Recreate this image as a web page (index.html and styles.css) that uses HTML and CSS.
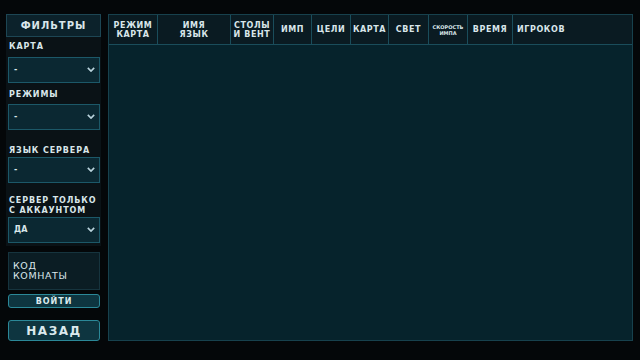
FILE: index.html
```html
<!DOCTYPE html>
<html lang="ru">
<head>
  <meta charset="UTF-8">
  <title>Лобби</title>
  <link rel="stylesheet" href="styles.css">
</head>
<body>

<div class="screen">
  <div class="sidebar">
    <div class="sidebar-title">ФИЛЬТРЫ</div>
    <div class="filters">
      <div class="label">КАРТА</div>
      <div class="select"><span>-</span><svg class="chev" viewBox="0 0 10 6"><path d="M1 1 L5 5 L9 1" /></svg></div>
      <div class="label l2">РЕЖИМЫ</div>
      <div class="select"><span>-</span><svg class="chev" viewBox="0 0 10 6"><path d="M1 1 L5 5 L9 1" /></svg></div>
      <div class="label l3">ЯЗЫК СЕРВЕРА</div>
      <div class="select"><span>-</span><svg class="chev" viewBox="0 0 10 6"><path d="M1 1 L5 5 L9 1" /></svg></div>
      <div class="label l4">СЕРВЕР ТОЛЬКО<br>С АККАУНТОМ</div>
      <div class="select"><span>ДА</span><svg class="chev" viewBox="0 0 10 6"><path d="M1 1 L5 5 L9 1" /></svg></div>
    </div>
    <div class="room-code">КОД<br>КОМНАТЫ</div>
    <button class="btn btn-small">ВОЙТИ</button>
    <button class="btn btn-back">НАЗАД</button>
  </div>

  <div class="main">
    <div class="head">
      <div class="col c1">РЕЖИМ<br>КАРТА</div>
      <div class="col c2">ИМЯ<br>ЯЗЫК</div>
      <div class="col c3">СТОЛЫ<br>И ВЕНТ</div>
      <div class="col c4">ИМП</div>
      <div class="col c5">ЦЕЛИ</div>
      <div class="col c6">КАРТА</div>
      <div class="col c7">СВЕТ</div>
      <div class="col c8 tiny">СКОРОСТЬ<br>ИМПА</div>
      <div class="col c9">ВРЕМЯ</div>
      <div class="col c10 left">ИГРОКОВ</div>
    </div>
    <div class="list"></div>
  </div>
</div>

</body>
</html>
```

FILE: styles.css
```css
body {
  margin: 0;
  background-color: #040709;
  font-family: "DejaVu Sans", "Liberation Sans", sans-serif;
  font-weight: bold;
  color: #d9e6ea;
}

.screen {
  width: 640px;
  height: 360px;
  box-sizing: border-box;
  padding: 14px 7px 19px 6px;
  display: flex;
  gap: 7px;
}

.sidebar {
  width: 95px;
  display: flex;
  flex-direction: column;
}

.sidebar-title {
  height: 23px;
  box-sizing: border-box;
  background-color: #0c222b;
  border: 1px solid #1d4654;
  font-size: 10px;
  letter-spacing: 1px;
  text-align: center;
  line-height: 21px;
}

.filters {
  height: 209px;
  background-color: #0a1216;
  padding: 0 1px 0 2px;
}

.label {
  font-size: 8px;
  letter-spacing: 0.9px;
  line-height: 20px;
  padding-left: 1px;
}

.label.l2 {
  padding-top: 3px;
  line-height: 18px;
}

.label.l3 {
  padding-top: 14px;
  line-height: 13px;
}

.label.l4 {
  padding-top: 13px;
  padding-bottom: 1px;
  line-height: 10px;
}

.select {
  height: 26px;
  box-sizing: border-box;
  background-color: #0b2832;
  border: 1px solid #1c5868;
  display: flex;
  align-items: center;
  justify-content: space-between;
  padding: 0 4px 2px 5px;
  font-size: 8px;
}

.chev {
  width: 8px;
  height: 5px;
}

.chev path {
  fill: none;
  stroke: #b9d3dc;
  stroke-width: 2;
}

.room-code {
  margin: 6px 1px 0 2px;
  height: 38px;
  box-sizing: border-box;
  background-color: #0b1d24;
  border: 1px solid #16343e;
  font-size: 9.5px;
  font-weight: normal;
  line-height: 10px;
  letter-spacing: 0.6px;
  padding: 8px 0 0 4px;
}

.btn {
  font-family: inherit;
  font-weight: bold;
  color: #dbe9ed;
  background-color: #0e3540;
  border: 1px solid #2b8898;
  border-radius: 3px;
  padding: 0;
  margin: 0 1px 0 2px;
}

.btn-small {
  height: 14px;
  margin-top: 4px;
  font-size: 8px;
  letter-spacing: 1px;
}

.btn-back {
  height: 21px;
  margin-top: 12px;
  font-size: 12px;
  letter-spacing: 1.5px;
}

.main {
  flex: 1;
  display: flex;
  flex-direction: column;
  border: 1px solid #17414d;
  background-color: #06232c;
}

.head {
  height: 29px;
  display: flex;
  background-color: #0a1b22;
  border-bottom: 1px solid #1a4d5b;
}

.col {
  display: flex;
  align-items: center;
  justify-content: center;
  text-align: center;
  font-size: 8px;
  line-height: 9px;
  letter-spacing: 0.6px;
  border-right: 1px solid #1a4d5b;
}

.col.tiny {
  font-size: 5px;
  line-height: 6px;
  letter-spacing: 0;
}

.col.left {
  justify-content: flex-start;
  padding-left: 4px;
  border-right: none;
}

.c1 { width: 48px; }
.c2 { width: 72px; }
.c3 { width: 42px; }
.c4 { width: 37px; }
.c5 { width: 38px; }
.c6 { width: 37px; }
.c7 { width: 39px; }
.c8 { width: 38px; }
.c9 { width: 44px; }
.c10 { flex: 1; }

.list {
  flex: 1;
}
```
